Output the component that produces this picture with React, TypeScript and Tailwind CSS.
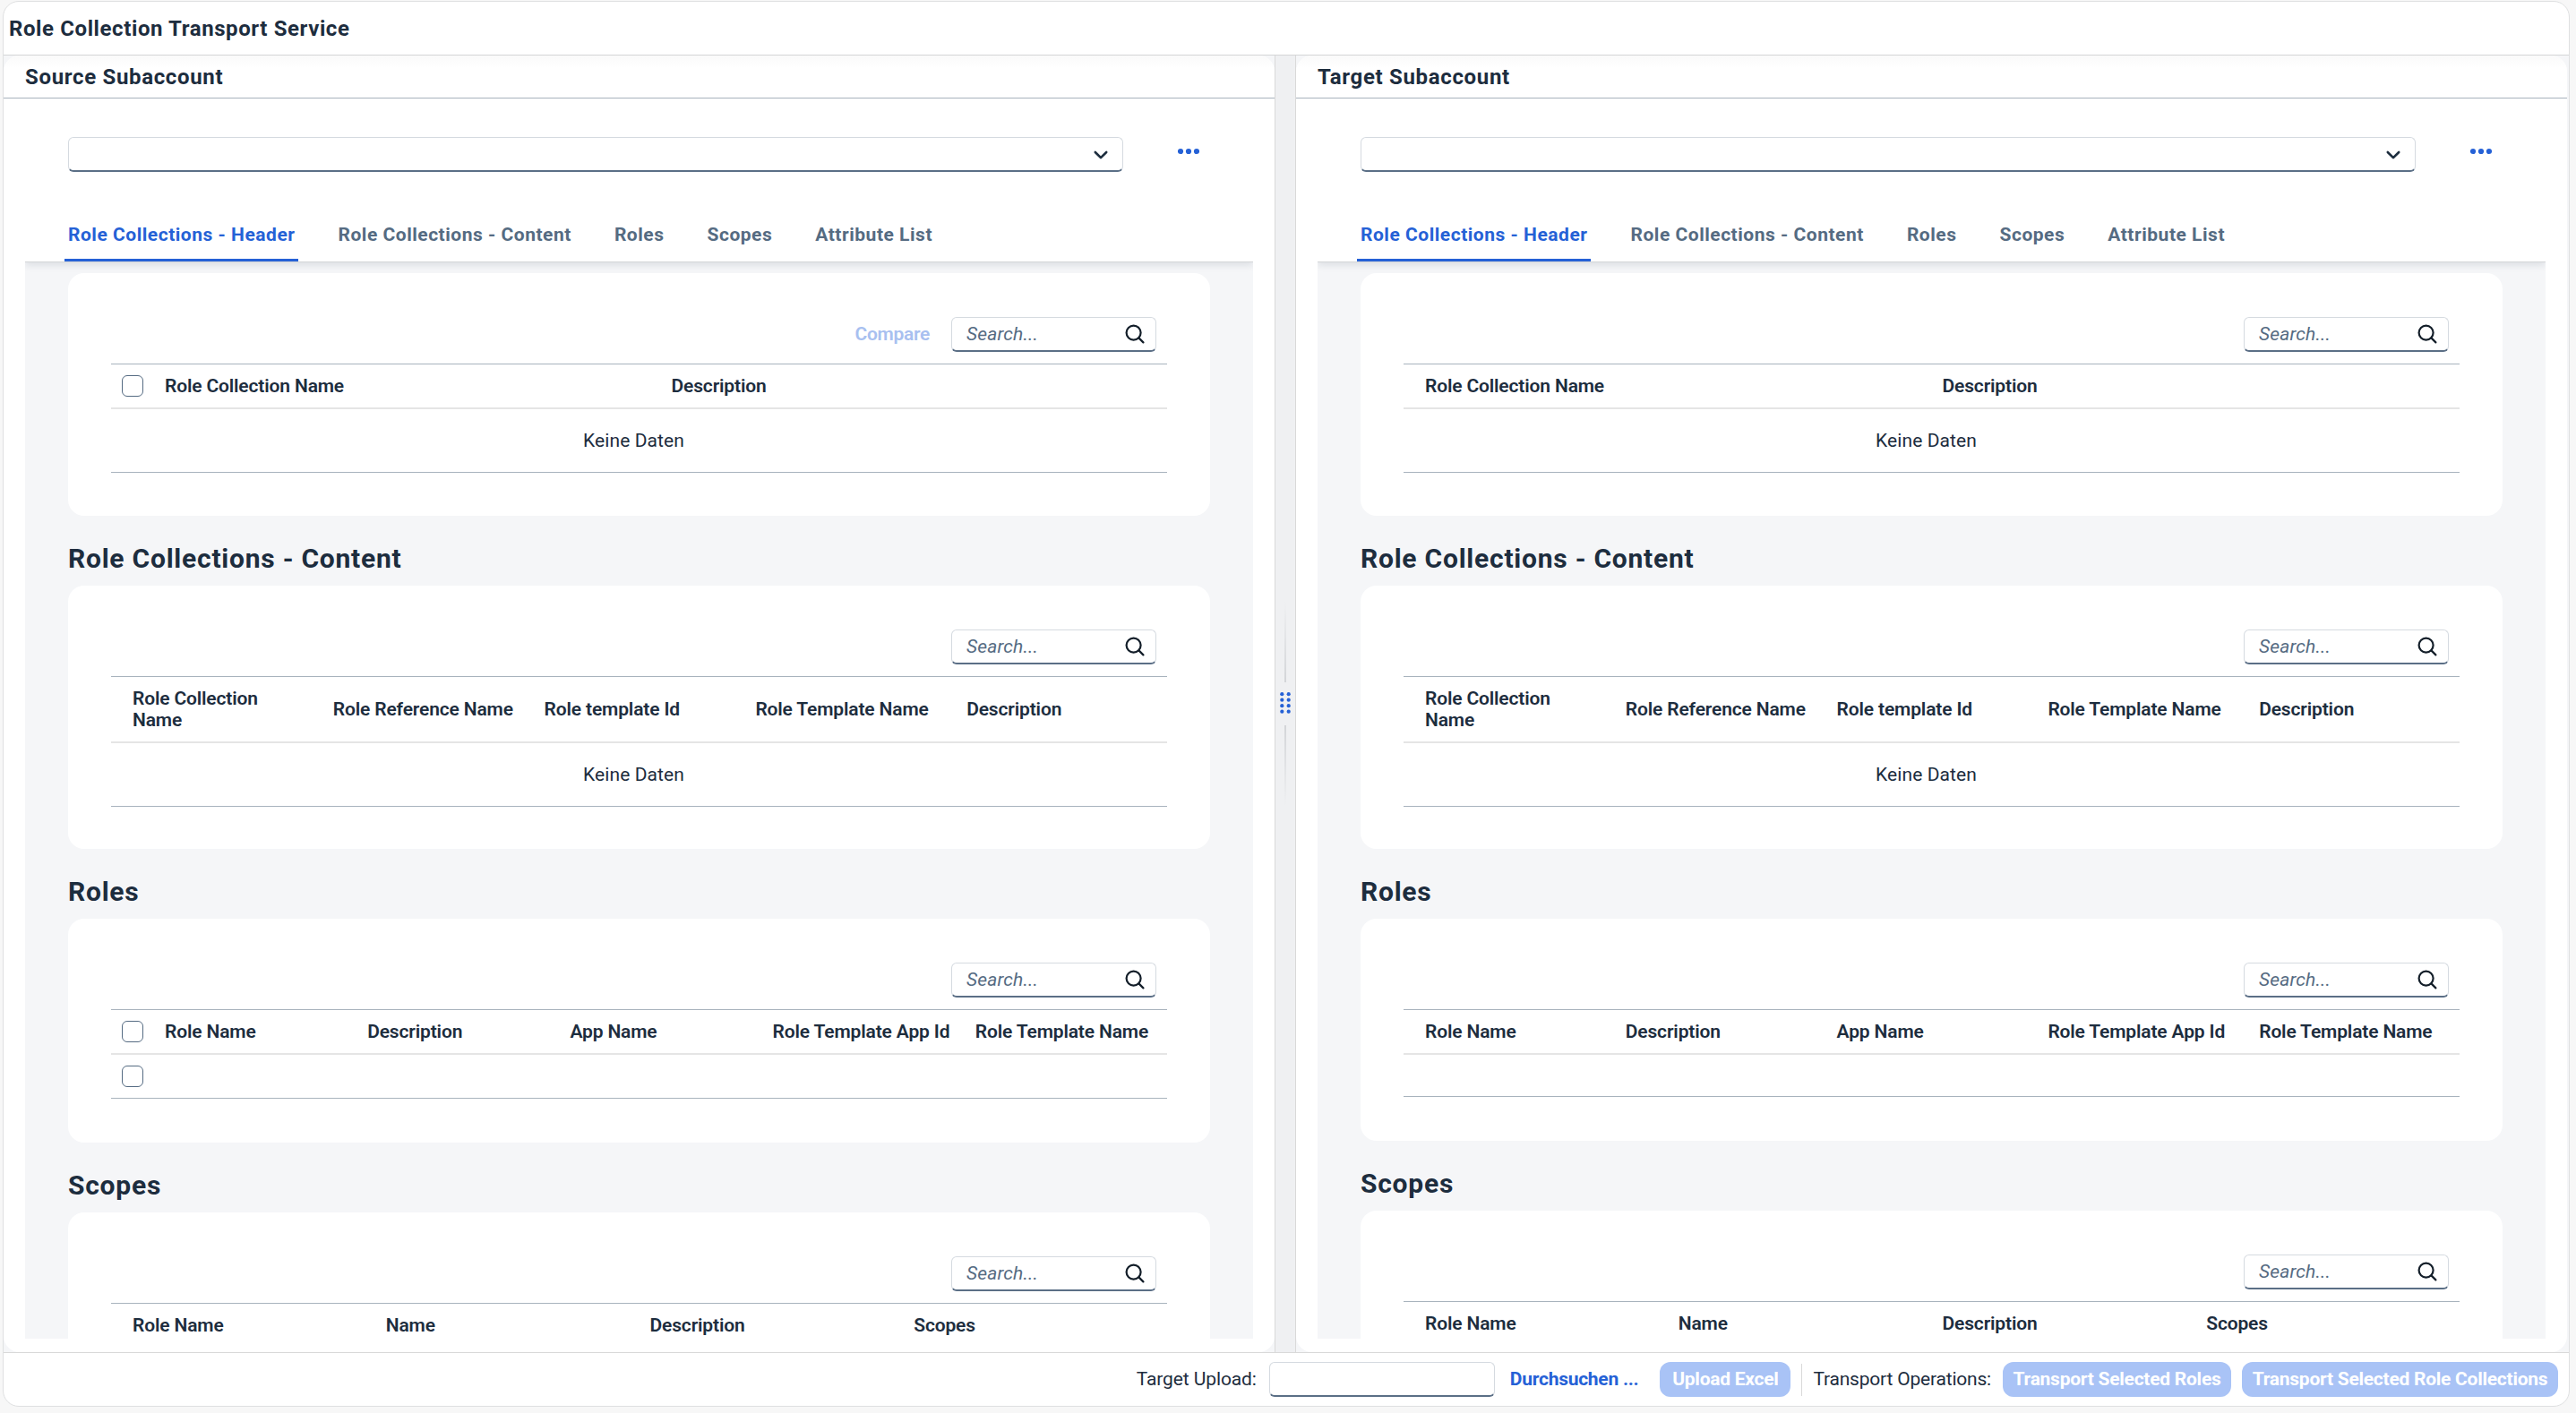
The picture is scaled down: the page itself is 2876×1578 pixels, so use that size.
import React from "react";

type Section = {
  title?: string;
  compare?: boolean;
  select?: boolean;
  columns: string[];
  gridClass: string;
  headerClass: string;
  body: "empty" | "row" | "none";
  bodyClass?: string;
  padClass: string;
};

const contentSection: Section = {
  title: "Role Collections - Content",
  columns: ["Role Collection Name", "Role Reference Name", "Role template Id", "Role Template Name", "Description"],
  gridClass: "grid-cols-5",
  headerClass: "h-[72px]",
  body: "empty",
  padClass: "pb-[47px]",
};

const scopesSection: Section = {
  title: "Scopes",
  columns: ["Role Name", "Name", "Description", "Scopes"],
  gridClass: "grid-cols-4",
  headerClass: "h-12",
  body: "none",
  padClass: "pb-12",
};

const headerSection: Section = {
  columns: ["Role Collection Name", "Description"],
  gridClass: "grid-cols-2",
  headerClass: "h-12",
  body: "empty",
  padClass: "pb-12",
};

const rolesSection: Section = {
  title: "Roles",
  columns: ["Role Name", "Description", "App Name", "Role Template App Id", "Role Template Name"],
  gridClass: "grid-cols-5",
  headerClass: "h-12",
  body: "row",
  bodyClass: "h-[46px]",
  padClass: "pb-[49px]",
};

const sourceSections: Section[] = [
  { ...headerSection, compare: true, select: true },
  contentSection,
  { ...rolesSection, select: true, bodyClass: "h-12" },
  scopesSection,
];

const targetSections: Section[] = [headerSection, contentSection, rolesSection, scopesSection];

const tabs = ["Role Collections - Header", "Role Collections - Content", "Roles", "Scopes", "Attribute List"];

function Checkbox() {
  return <span className="block size-6 shrink-0 rounded-[6px] border border-[#556b82] bg-white" />;
}

function SearchField() {
  return (
    <div className="flex h-[39px] w-[229px] items-center justify-between rounded-[6px] border border-b-2 border-[#d5dae0] border-b-[#5b6f86] bg-white pr-[11px] pl-[16px]">
      <span className="text-[21px] leading-none tracking-[0.15px] text-[#556b82] italic">Search...</span>
      <svg width="24" height="24" viewBox="0 0 24 24" fill="none" stroke="#131e29" strokeWidth="2.2" strokeLinecap="round">
        <circle cx="10.6" cy="10.6" r="8" />
        <path d="M16.4 16.4 21.4 21.4" />
      </svg>
    </div>
  );
}

function SectionCard({ section }: { section: Section }) {
  return (
    <>
      {section.title && (
        <h2 className="h-[78px] pt-8 text-[30px] leading-[31px] font-bold tracking-[0.76px]">{section.title}</h2>
      )}
      <div className={`w-[1275px] rounded-[18px] bg-white px-12 pt-[49px] ${section.padClass}`}>
        <div className="mb-[13px] flex items-center justify-end gap-6 pr-3">
          {section.compare && (
            <span className="text-[21px] leading-none font-semibold tracking-[-0.3px] text-[#a8c0f0]">Compare</span>
          )}
          <SearchField />
        </div>
        <div className="border-t border-[#a8b3bd]">
          <div className={`flex items-center ${section.headerClass}`}>
            {section.select && (
              <div className="flex w-12 shrink-0 pl-3">
                <Checkbox />
              </div>
            )}
            <div className={`grid flex-1 items-center ${section.gridClass}`}>
              {section.columns.map((c, i) => (
                <div
                  key={c}
                  className={`min-w-0 text-[21px] leading-6 font-semibold tracking-[-0.15px] ${
                    i === 0 && !section.select ? "pr-3 pl-6" : "pl-3"
                  }`}
                >
                  {c}
                </div>
              ))}
            </div>
          </div>
          {section.body !== "none" && (
            <div className="border-t-2 border-b border-t-[#e5e5e5] border-b-[#a8b3bd]">
              {section.body === "empty" ? (
                <div className="flex h-[70px] items-center justify-center pr-3 text-[21px] leading-none tracking-[0.1px]">
                  Keine Daten
                </div>
              ) : (
                <div className={`flex items-center pl-3 ${section.bodyClass}`}>{section.select && <Checkbox />}</div>
              )}
            </div>
          )}
        </div>
      </div>
    </>
  );
}

function Pane({ title, sections }: { title: string; sections: Section[] }) {
  return (
    <section className="flex w-[1419px] shrink-0 flex-col overflow-hidden rounded-[18px] bg-white pb-[15px]">
      <header className="flex h-12 shrink-0 items-center border-b border-[#a8b3bd] bg-linear-to-b from-[#fafafa] to-white to-30% pl-6 text-[24px] leading-none font-bold tracking-[0.67px]">
        {title}
      </header>
      <div className="flex shrink-0 items-start pt-[43px] pl-[72px]">
        <div className="flex h-[39px] w-[1178px] items-center justify-end rounded-[6px] border border-b-2 border-[#d5dae0] border-b-[#5b6f86] pr-[14px]">
          <svg className="mt-[2px]" width="20" height="14" viewBox="0 0 20 14" fill="none" stroke="#1d2d3e" strokeWidth="2.6" strokeLinecap="round" strokeLinejoin="round">
            <path d="M3.8 4 10 10.2 16.2 4" />
          </svg>
        </div>
        <svg className="mt-3 ml-[61px]" width="24" height="8" viewBox="0 0 24 8" fill="#2561d6">
          <circle cx="3" cy="4" r="3.1" />
          <circle cx="12" cy="4" r="3.1" />
          <circle cx="21" cy="4" r="3.1" />
        </svg>
      </div>
      <div className="mx-6 flex min-h-0 flex-1 flex-col overflow-hidden">
        <nav className="z-10 flex h-[101px] shrink-0 items-end gap-[40px] border-b border-[#d4d6d8] bg-white pl-11 shadow-[0_3px_8px_rgba(34,53,72,0.12)]">
          {tabs.map((t, i) => (
            <span
              key={t}
              className={`flex h-[43px] items-start border-b-3 px-1 text-[21px] leading-[26px] font-bold tracking-[0.52px] whitespace-nowrap ${
                i === 0 ? "border-[#2561d6] text-[#2561d6]" : "border-transparent text-[#556b82]"
              }`}
            >
              {t}
            </span>
          ))}
        </nav>
        <div className="min-h-0 flex-1 overflow-hidden bg-[#f5f6f8] pt-3 pl-12">
          {sections.map((s, i) => (
            <SectionCard key={i} section={s} />
          ))}
        </div>
      </div>
    </section>
  );
}

function Splitter() {
  const dots = [0, 1, 2, 3];
  return (
    <div className="flex w-6 shrink-0 flex-col items-center border-x border-[#d9d9d9] bg-[#eff0f2] pt-[610px]">
      <div className="h-[90px] w-[2px] bg-linear-to-b from-transparent to-[#d3d5d8]" />
      <svg className="my-[10px]" width="14" height="28" viewBox="0 0 14 28" fill="#2561d6">
        {dots.map((d) => (
          <g key={d}>
            <circle cx="3.3" cy={3.2 + d * 6.5} r="2.1" />
            <circle cx="10.7" cy={3.2 + d * 6.5} r="2.1" />
          </g>
        ))}
      </svg>
      <div className="h-[90px] w-[2px] bg-linear-to-b from-[#d3d5d8] to-transparent" />
    </div>
  );
}

function FilledButton({ label, widthClass }: { label: string; widthClass: string }) {
  return (
    <button
      className={`flex h-[39px] shrink-0 items-center justify-center rounded-[12px] bg-[#a9c3f6] text-[21px] leading-none font-bold tracking-[-0.26px] whitespace-nowrap text-white ${widthClass}`}
    >
      {label}
    </button>
  );
}

export default function App() {
  return (
    <div className="h-[1578px] w-[2876px] overflow-hidden bg-[#f7f7f7] pt-px pl-[3px] font-['Roboto',sans-serif] text-[#1d2d3e]">
      <div className="flex h-[1570px] w-[2866px] flex-col overflow-hidden rounded-[18px] border border-[#dfe0e1] bg-white">
        <header className="flex h-[60px] shrink-0 items-center border-b border-[#d4d5d6] pl-[6px] text-[24px] leading-none font-bold tracking-[0.6px]">
          Role Collection Transport Service
        </header>
        <main className="flex h-[1448px] shrink-0 bg-[#f5f6f8]">
          <Pane title="Source Subaccount" sections={sourceSections} />
          <Splitter />
          <Pane title="Target Subaccount" sections={targetSections} />
        </main>
        <footer className="flex min-h-0 flex-1 items-center justify-end border-t border-[#d9d9d9] pr-[12px] text-[21px] leading-none whitespace-nowrap">
          <span className="mr-[14px] tracking-[-0.1px]">Target Upload:</span>
          <span className="mr-[17px] h-[39px] w-[252px] rounded-[6px] border border-b-2 border-[#d5dae0] border-b-[#5b6f86]" />
          <span className="mr-[24px] font-bold tracking-[-0.26px] text-[#2561d6]">Durchsuchen ...</span>
          <FilledButton label="Upload Excel" widthClass="w-[146px]" />
          <span className="mx-3 h-9 w-px bg-[#d9d9d9]" />
          <span className="mr-[13px] tracking-[-0.2px]">Transport Operations:</span>
          <FilledButton label="Transport Selected Roles" widthClass="w-[255px] mr-3" />
          <FilledButton label="Transport Selected Role Collections" widthClass="w-[353px]" />
        </footer>
      </div>
    </div>
  );
}
